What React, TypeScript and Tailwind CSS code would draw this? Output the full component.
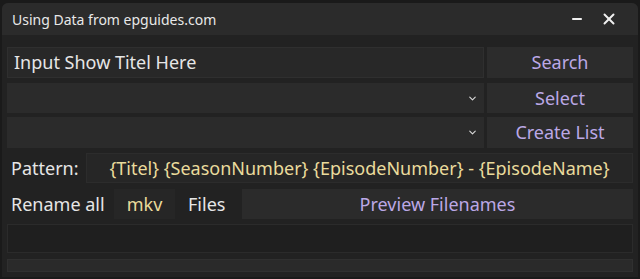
import { ChevronDown, Minus, X } from "lucide-react";

const font = { fontFamily: '"Noto Sans", "Open Sans", sans-serif' };

function Btn({ label }: { label: string }) {
  return (
    <div className="w-[146px] h-full bg-[#2c2c2c] flex items-center justify-center text-[#bba8e6]">
      {label}
    </div>
  );
}

export default function App() {
  return (
    <div className="w-[640px] h-[279px] bg-[#1a1a1a] pt-[3px] px-[2px] pb-[2px] text-[18px]" style={font}>
      <div className="h-full rounded-t-[6px] bg-[#222222] flex flex-col overflow-hidden">
        {/* Title bar */}
        <div className="h-[32px] shrink-0 bg-[#2b2b2b] flex items-center pl-[10px] pr-[20px] text-[14px] text-[#e8e8e8]">
          <span>Using Data from epguides.com</span>
          <div className="ml-auto flex items-center gap-[16px]">
            <Minus size={14} strokeWidth={3.2} className="text-[#f0f0f0]" />
            <X size={18} strokeWidth={2.6} className="text-[#f0f0f0]" />
          </div>
        </div>

        <div className="flex flex-col pl-[5px] pr-[5px] pt-[12px] text-[#e6e6e6]">
          {/* Search row */}
          <div className="flex h-[31px] gap-[3px]">
            <div className="flex-1 bg-[#282828] border border-[#2f2f2f] flex items-center pl-[6px]">
              Input Show Titel Here
            </div>
            <Btn label="Search" />
          </div>

          <div className="flex h-[30px] gap-[3px] mt-[5px]">
            <div className="flex-1 bg-[#2b2b2b] flex items-center justify-end pr-[6px]">
              <ChevronDown size={11} strokeWidth={2.5} className="text-[#d8d8d8]" />
            </div>
            <Btn label="Select" />
          </div>

          <div className="flex h-[31px] gap-[3px] mt-[4px]">
            <div className="flex-1 bg-[#2b2b2b] flex items-center justify-end pr-[6px]">
              <ChevronDown size={11} strokeWidth={2.5} className="text-[#d8d8d8]" />
            </div>
            <Btn label="Create List" />
          </div>

          {/* Pattern */}
          <div className="flex h-[30px] mt-[5px] items-center">
            <span className="w-[79px] pl-[4px]">Pattern:</span>
            <div className="flex-1 h-full bg-[#262626] border border-[#2c2c2c] flex items-center justify-center text-[#eadb9c]">
              {"{Titel} {SeasonNumber} {EpisodeNumber} - {EpisodeName}"}
            </div>
          </div>

          {/* Rename */}
          <div className="flex h-[30px] mt-[6px] items-center">
            <span className="w-[107px] pl-[4px]">Rename all</span>
            <div className="w-[61px] h-full bg-[#262626] flex items-center justify-center text-[#eadb9c]">
              mkv
            </div>
            <span className="w-[67px] pl-[13px]">Files</span>
            <div className="flex-1 h-full bg-[#2b2b2b] flex items-center justify-center text-[#bba8e6]">
              Preview Filenames
            </div>
          </div>

          <div className="h-[29px] mt-[5px] bg-[#1f1f1f] border border-[#2b2b2b]" />
          <div className="h-[13px] mt-[6px] bg-[#2a2a2a] border border-[#303030]" />
        </div>
      </div>
    </div>
  );
}
